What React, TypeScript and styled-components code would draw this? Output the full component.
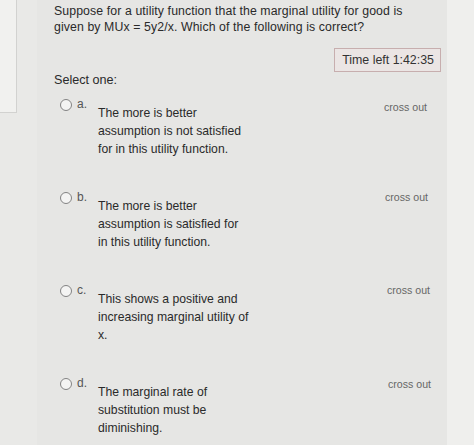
import React from 'react';
import styled, { createGlobalStyle } from 'styled-components';

const GlobalStyle = createGlobalStyle`
  html, body {
    margin: 0;
    padding: 0;
    background: #ecebe9;
    font-family: "Liberation Sans", Arial, sans-serif;
  }
`;

const Page = styled.div`
  display: flex;
  width: 474px;
  height: 445px;
  overflow: hidden;
  background: #ecebe9;
`;

const LeftStrip = styled.div`
  width: 37px;
  flex-shrink: 0;
  background: #e9e9e7;
`;

const SideBox = styled.div`
  width: 16px;
  height: 112px;
  background: #f1f1ef;
  border-right: 1px solid #d2d2d0;
  border-bottom: 1px solid #d2d2d0;
`;

const Panel = styled.div`
  flex: 1;
  background: #e6e6e4;
  padding: 3px 6px 0 17px;
  color: #2a2a2a;
`;

const RightStrip = styled.div`
  width: 27px;
  flex-shrink: 0;
  background: #efefed;
`;

const Question = styled.p`
  margin: 0;
  max-width: 350px;
  font-size: 12.3px;
  line-height: 16px;
  letter-spacing: 0.1px;
`;

const TimerRow = styled.div`
  display: flex;
  justify-content: flex-end;
  margin-top: 13px;
`;

const Timer = styled.div`
  border: 1px solid #c7aeae;
  background: #ebe5e4;
  padding: 0 6px 0 7px;
  height: 22px;
  line-height: 22px;
  font-size: 12.4px;
  color: #333;
`;

const SelectLabel = styled.div`
  font-size: 12.6px;
  line-height: 16px;
`;

const Options = styled.div`
  display: flex;
  flex-direction: column;
  margin-top: 8px;
`;

const Option = styled.div`
  display: grid;
  grid-template-columns: 38px 152px 1fr auto;
  height: 93px;
  padding-left: 6px;
`;

const Marker = styled.div`
  display: flex;
  align-items: flex-start;
  gap: 5px;
  font-size: 12px;
  line-height: 16px;
  color: #555;
`;

const Radio = styled.span`
  width: 10px;
  height: 10px;
  margin-top: 3px;
  border-radius: 50%;
  border: 1px solid #838383;
  background: #f4f4f3;
`;

const Answer = styled.div`
  margin-top: 8px;
  font-size: 12.2px;
  line-height: 18px;
  color: #2a2a2a;
`;

const CrossOut = styled.div<{ $right: number; $top: number }>`
  font-size: 10.6px;
  line-height: 14px;
  color: #666;
  margin-right: ${(p) => p.$right}px;
  margin-top: ${(p) => p.$top}px;
`;

const options = [
  { letter: 'a.', text: 'The more is better assumption is not satisfied for in this utility function.', right: 14, top: 4 },
  { letter: 'b.', text: 'The more is better assumption is satisfied for in this utility function.', right: 13, top: 1 },
  { letter: 'c.', text: 'This shows a positive and increasing marginal utility of x.', right: 11, top: 1 },
  { letter: 'd.', text: 'The marginal rate of substitution must be diminishing.', right: 10, top: 2 },
];

export default function App() {
  return (
    <Page>
      <GlobalStyle />
      <LeftStrip>
        <SideBox />
      </LeftStrip>
      <Panel>
        <Question>
          Suppose for a utility function that the marginal utility for good is given by MUx = 5y2/x. Which of the
          following is correct?
        </Question>
        <TimerRow>
          <Timer>Time left 1:42:35</Timer>
        </TimerRow>
        <SelectLabel>Select one:</SelectLabel>
        <Options>
          {options.map((o) => (
            <Option key={o.letter}>
              <Marker>
                <Radio />
                {o.letter}
              </Marker>
              <Answer>{o.text}</Answer>
              <div />
              <CrossOut $right={o.right} $top={o.top}>
                cross out
              </CrossOut>
            </Option>
          ))}
        </Options>
      </Panel>
      <RightStrip />
    </Page>
  );
}
